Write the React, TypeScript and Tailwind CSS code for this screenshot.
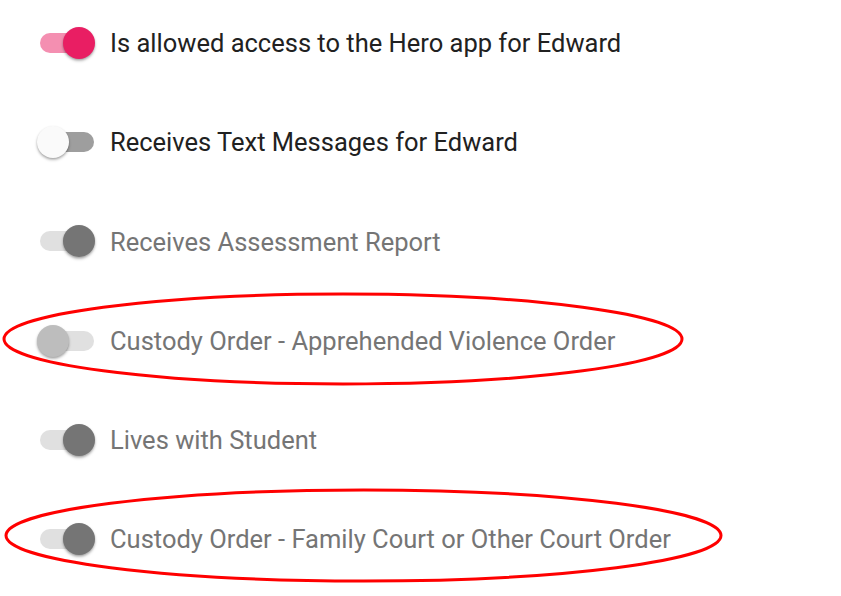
import React from "react";

type ToggleState = "on" | "off" | "disabledOn" | "disabledOff";

const rows: { label: string; state: ToggleState }[] = [
  { label: "Is allowed access to the Hero app for Edward", state: "on" },
  { label: "Receives Text Messages for Edward", state: "off" },
  { label: "Receives Assessment Report", state: "disabledOn" },
  { label: "Custody Order - Apprehended Violence Order", state: "disabledOff" },
  { label: "Lives with Student", state: "disabledOn" },
  { label: "Custody Order - Family Court or Other Court Order", state: "disabledOn" },
];

function Toggle({ state }: { state: ToggleState }) {
  const checked = state === "on" || state === "disabledOn";
  const track =
    state === "on"
      ? "bg-[#f48fb1]"
      : state === "off"
        ? "bg-[#9e9e9e]"
        : "bg-[#e0e0e0]";
  const thumb =
    state === "on"
      ? "bg-[#e91e63]"
      : state === "off"
        ? "bg-[#fafafa]"
        : state === "disabledOn"
          ? "bg-[#757575]"
          : "bg-[#bdbdbd]";
  return (
    <div className="relative h-[32px] w-[60px] shrink-0">
      <div className={`absolute left-[4px] top-[6px] h-[20px] w-[54px] rounded-full ${track}`} />
      <div
        className={`absolute top-0 size-[32px] rounded-full shadow-[0_2px_3px_rgba(0,0,0,0.25),0_1px_2px_rgba(0,0,0,0.15)] ${thumb} ${
          checked ? "left-[27px]" : "left-[1px]"
        }`}
      />
    </div>
  );
}

export default function App() {
  return (
    <div className="relative h-[596px] w-[841px] overflow-hidden bg-white font-['Roboto',sans-serif]">
      <div className="flex flex-col gap-[67.2px] pl-[36px] pt-[27px]">
        {rows.map((row) => {
          const active = row.state === "on" || row.state === "off";
          return (
            <div key={row.label} className="flex h-[32px] items-center gap-[14px]">
              <Toggle state={row.state} />
              <span
                className={`mt-[2px] text-[25.5px] leading-none ${active ? "text-[#212121]" : "text-[#757575]"}`}
              >
                {row.label}
              </span>
            </div>
          );
        })}
      </div>

      {/* red annotation rings */}
      <svg className="pointer-events-none absolute inset-0" width="841" height="596">
        <ellipse cx="343" cy="339" rx="339" ry="45" fill="none" stroke="#ff0000" strokeWidth="3" />
        <ellipse cx="363.5" cy="535.5" rx="357.5" ry="45.5" fill="none" stroke="#ff0000" strokeWidth="3" />
      </svg>
    </div>
  );
}
